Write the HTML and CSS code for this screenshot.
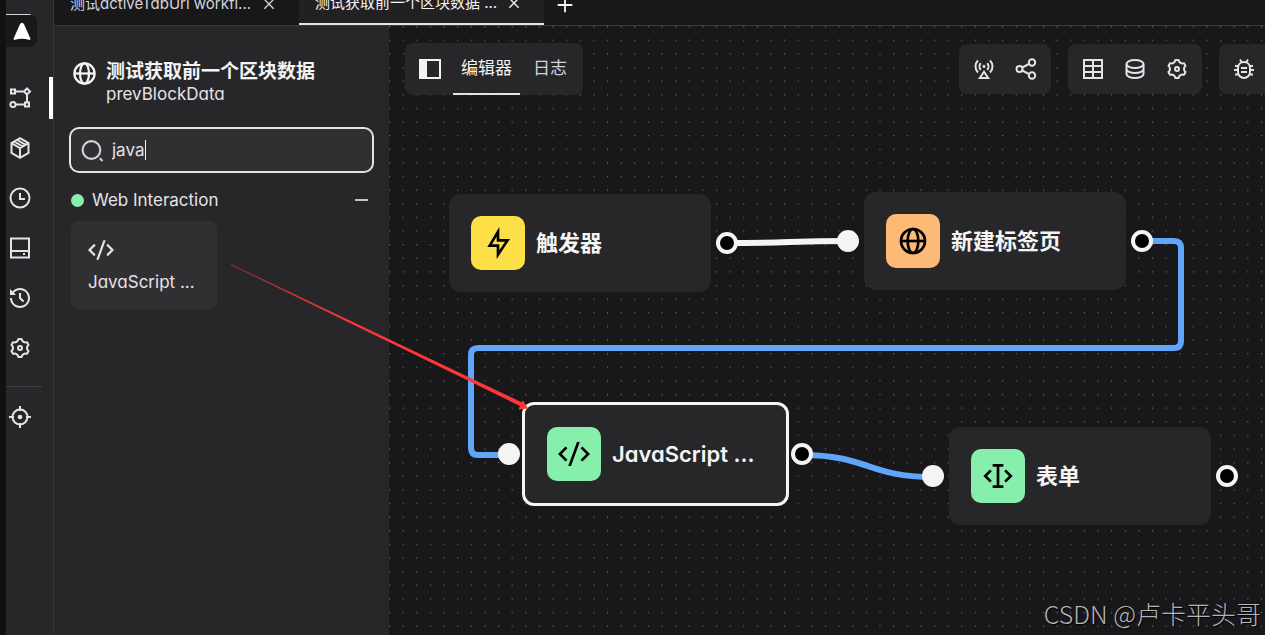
FILE: index.html
```
<!DOCTYPE html>
<html lang="zh-CN">
<head>
    <meta charset="UTF-8">
    <meta name="viewport" content="width=device-width, initial-scale=1.0">
    <title>测试获取前一个区块数据</title>
    <link rel="stylesheet" href="styles.css">
</head>
<body>
    <!-- icon set -->
    <svg class="icon-defs" aria-hidden="true">
        <symbol id="i-globe" viewBox="0 0 24 24"><g fill="none" stroke="currentColor" stroke-width="2"><circle cx="12" cy="12" r="9"/><ellipse cx="12" cy="12" rx="4" ry="9"/><path d="M3 12h18"/></g></symbol>
        <symbol id="i-flow" viewBox="0 0 24 24"><g fill="none" stroke="currentColor" stroke-width="2"><path d="M3 3.500h4v4H3zM17 16.500h4v4h-4zM7 5.500h9M19 8v8M8 18.500h9M19 2.500l3 3-3 3-3-3z"/><circle cx="5" cy="18.500" r="2.600"/></g></symbol>
        <symbol id="i-box" viewBox="0 0 24 24"><path fill="none" stroke="currentColor" stroke-width="2" d="M12 2.200l8.500 4.900v9.800L12 21.800l-8.500-4.900V7.100zM3.500 7.200L12 12l8.500-4.800M12 12v9.500M6.300 5.700l8.500 4.800M9.200 4l8.500 4.800"/></symbol>
        <symbol id="i-clock" viewBox="0 0 24 24"><path fill="none" stroke="currentColor" stroke-width="2" d="M12 2.500a9.500 9.500 0 1 0 0 19 9.500 9.500 0 0 0 0-19zM12 7v6h5"/></symbol>
        <symbol id="i-drive" viewBox="0 0 24 24"><path fill="none" stroke="currentColor" stroke-width="2" d="M3 2.500h18v19H3zM3 15h18"/><path fill="currentColor" d="M15 17h2v2h-2z"/></symbol>
        <symbol id="i-history" viewBox="0 0 24 24"><path fill="currentColor" d="M12 2c5.523 0 10 4.477 10 10s-4.477 10-10 10S2 17.523 2 12h2c0 4.418 3.582 8 8 8s8-3.582 8-8-3.582-8-8-8C9.536 4 7.332 5.114 5.865 6.865L8 9H2V3l2.447 2.446C6.280 3.336 8.984 2 12 2zm1 5v4.585l3.243 3.243-1.415 1.415L11 12.413V7h2z"/></symbol>
        <symbol id="i-gear" viewBox="0 0 24 24"><path fill="currentColor" d="M3.340 17a10.020 10.020 0 0 1-.978-2.326 3 3 0 0 0 .002-5.347A9.990 9.990 0 0 1 4.865 4.990a3 3 0 0 0 4.631-2.674 9.990 9.990 0 0 1 5.007.002 3 3 0 0 0 4.632 2.672c.579.590 1.093 1.261 1.525 2.010.433.749.757 1.530.978 2.326a3 3 0 0 0-.002 5.347 9.990 9.990 0 0 1-2.501 4.337 3 3 0 0 0-4.631 2.674 9.990 9.990 0 0 1-5.007-.002 3 3 0 0 0-4.632-2.672A10.018 10.018 0 0 1 3.340 17zm5.660.196a4.993 4.993 0 0 1 2.250 2.770c.499.047 1 .048 1.499.001A4.993 4.993 0 0 1 15 17.197a4.993 4.993 0 0 1 3.525-.565c.290-.408.540-.843.748-1.298A4.993 4.993 0 0 1 18 12c0-1.260.470-2.437 1.273-3.334a8.126 8.126 0 0 0-.750-1.298A4.993 4.993 0 0 1 15 6.804a4.993 4.993 0 0 1-2.250-2.770c-.499-.047-1-.048-1.499-.001A4.993 4.993 0 0 1 9 6.803a4.993 4.993 0 0 1-3.525.565 7.990 7.990 0 0 0-.748 1.298A4.993 4.993 0 0 1 6 12c0 1.260-.470 2.437-1.273 3.334a8.126 8.126 0 0 0 .750 1.298A4.993 4.993 0 0 1 9 17.196zM12 15a3 3 0 1 1 0-6 3 3 0 0 1 0 6zm0-2a1 1 0 1 0 0-2 1 1 0 0 0 0 2z"/></symbol>
        <symbol id="i-focus" viewBox="0 0 24 24"><g fill="none" stroke="currentColor" stroke-width="2"><circle cx="12" cy="12" r="7.500"/><path d="M12 1v5M12 18v5M1 12h5M18 12h5"/></g><circle cx="12" cy="12" r="2.300" fill="currentColor"/></symbol>
        <symbol id="i-search" viewBox="0 0 24 24"><path fill="none" stroke="currentColor" stroke-width="2" d="M11 3a8.500 8.500 0 1 0 0 17 8.500 8.500 0 0 0 0-17zM19 19.500l2.600 2.600"/></symbol>
        <symbol id="i-code" viewBox="0 0 24 24"><path fill="currentColor" d="M24 12l-5.657 5.657-1.414-1.414L21.172 12l-4.243-4.243 1.414-1.414L24 12zM2.828 12l4.243 4.243-1.414 1.414L0 12l5.657-5.657L7.070 7.757 2.828 12zm6.960 9H7.660l6.552-18h2.128L9.788 21z"/></symbol>
        <symbol id="i-form" viewBox="0 0 24 24"><path fill="currentColor" d="M8 21v-2h3V5H8V3h8v2h-3v14h3v2H8zM18.050 7.050L23 12l-4.950 4.950-1.414-1.414L20.172 12l-3.536-3.536L18.050 7.050zm-12.100 0l1.414 1.414L3.828 12l3.536 3.536L5.950 16.950 1 12l4.950-4.950z"/></symbol>
        <symbol id="i-flash" viewBox="0 0 24 24"><path fill="currentColor" fill-rule="evenodd" d="M13 9h8L11 24v-9H4l9-15v9zm-2 2V7.220L7.532 13H13v4.394L17.263 11H11z"/></symbol>
        <symbol id="i-sidebar" viewBox="0 0 24 24"><path fill="currentColor" fill-rule="evenodd" d="M1 2h22v20H1zM9 4v16h12V4z"/></symbol>
        <symbol id="i-signal" viewBox="0 0 24 24"><path fill="currentColor" fill-rule="evenodd" d="M12 13l6 9H6l6-9zm0 3.600L9.740 20h4.520L12 16.600zm-1.060-6.040a1.500 1.500 0 1 1 2.120-2.120 1.500 1.500 0 0 1-2.120 2.120zM5.281 2.783l1.415 1.415a7.500 7.500 0 0 0 0 10.606l-1.415 1.415a9.500 9.500 0 0 1 0-13.436zm13.436 0a9.500 9.500 0 0 1 0 13.436l-1.415-1.415a7.500 7.500 0 0 0 0-10.606l1.415-1.415zM8.110 5.611l1.414 1.414a3.500 3.500 0 0 0 0 4.950l-1.414 1.414a5.500 5.500 0 0 1 0-7.778zm7.778 0a5.500 5.500 0 0 1 0 7.778l-1.414-1.414a3.500 3.500 0 0 0 0-4.950l1.414-1.414z"/></symbol>
        <symbol id="i-share" viewBox="0 0 24 24"><g fill="none" stroke="currentColor" stroke-width="2"><circle cx="5.500" cy="12" r="3"/><circle cx="18" cy="5.500" r="3.200"/><circle cx="18" cy="18.500" r="3.200"/><path d="M8.200 10.500l7-3.600M8.200 13.500l7 3.600"/></g></symbol>
        <symbol id="i-table" viewBox="0 0 24 24"><path fill="none" stroke="currentColor" stroke-width="2" d="M3 3h18v18H3zM3 9h18M3 15h18M12 3v18"/></symbol>
        <symbol id="i-database" viewBox="0 0 24 24"><g fill="none" stroke="currentColor" stroke-width="2"><ellipse cx="12" cy="7" rx="8.500" ry="4"/><path d="M3.500 7v10c0 2.200 3.800 4 8.500 4s8.500-1.800 8.500-4V7M3.500 12c0 2.200 3.800 4 8.500 4s8.500-1.800 8.500-4"/></g></symbol>
        <symbol id="i-bug" viewBox="0 0 24 24"><path fill="none" stroke="currentColor" stroke-width="2" d="M12 5c3.500 0 6 2.500 6 6v4a6 6 0 0 1-12 0v-4c0-3.500 2.500-6 6-6zM8 2.500l2 3M16 2.500l-2 3M3 9h4M17 9h4M2 13h4M18 13h4M3 17.500h4M17 17.500h4M9 11h6M9 15h6"/></symbol>
        <symbol id="i-close" viewBox="0 0 24 24"><path fill="none" stroke="currentColor" stroke-width="2" d="M5 5l14 14M19 5L5 19"/></symbol>
        <symbol id="i-plus" viewBox="0 0 24 24"><path fill="none" stroke="currentColor" stroke-width="2" d="M12 4v16M4 12h16"/></symbol>
    </svg>

    <nav class="rail">
        <a class="logo" href="#" aria-label="Home">
            <svg viewBox="0 0 24 24"><path fill="#fff" d="M12 3c1 0 2 1 2.600 2.500L21 20c.5 1.400-.3 2-1.500 1.600C15 20 9 20 4.500 21.600 3.300 22 2.500 21.400 3 20L9.400 5.500C10 4 11 3 12 3z"/></svg>
        </a>
        <a class="rail-link active" href="#" aria-label="Workflows"><svg><use href="#i-flow"/></svg></a>
        <a class="rail-link" href="#" aria-label="Packages"><svg><use href="#i-box"/></svg></a>
        <a class="rail-link" href="#" aria-label="Schedule"><svg><use href="#i-clock"/></svg></a>
        <a class="rail-link" href="#" aria-label="Storage"><svg><use href="#i-drive"/></svg></a>
        <a class="rail-link" href="#" aria-label="Logs"><svg><use href="#i-history"/></svg></a>
        <a class="rail-link" href="#" aria-label="Settings"><svg><use href="#i-gear"/></svg></a>
        <hr>
        <a class="rail-link" href="#" aria-label="Element selector"><svg><use href="#i-focus"/></svg></a>
    </nav>

    <div class="app">
        <header class="tabs">
            <div class="tab">
                <span>测试activeTabUrl workfl...</span>
                <button aria-label="Close"><svg><use href="#i-close"/></svg></button>
            </div>
            <div class="tab active">
                <span>测试获取前一个区块数据 ...</span>
                <button aria-label="Close"><svg><use href="#i-close"/></svg></button>
            </div>
            <button class="add-tab" aria-label="New tab"><svg><use href="#i-plus"/></svg></button>
        </header>

        <div class="workspace">
            <aside class="panel">
                <div class="workflow">
                    <svg><use href="#i-globe"/></svg>
                    <div>
                        <h1>测试获取前一个区块数据</h1>
                        <p>prevBlockData</p>
                    </div>
                </div>
                <label class="search">
                    <svg><use href="#i-search"/></svg>
                    <input type="text" value="java" aria-label="Search blocks">
                    <i class="caret"></i>
                </label>
                <button class="category">
                    <i class="dot"></i>
                    <span>Web Interaction</span>
                    <i class="minus"></i>
                </button>
                <div class="blocks">
                    <button class="block">
                        <svg><use href="#i-code"/></svg>
                        <span>JavaScript ...</span>
                    </button>
                </div>
            </aside>

            <main class="canvas">
                <svg class="edges" aria-hidden="true">
                    <defs>
                        <pattern id="grid" width="20" height="20" patternUnits="userSpaceOnUse" patternTransform="scale(.6812)">
                            <rect width="1.600" height="2" fill="#66666b"/>
                        </pattern>
                    </defs>
                    <rect width="100%" height="100%" fill="url(#grid)"/>
                    <path class="edge light" d="M338 217C400 217 400 215 459 215"/>
                    <path class="edge" d="M753 215h32q7 0 7 7v93q0 7-7 7H89q-7 0-7 7v93q0 7 7 7h30"/>
                    <path class="edge" d="M413 429C479 429 479 451 544 451"/>
                </svg>

                <div class="toolbar">
                    <div class="group modes">
                        <button aria-label="Toggle sidebar"><svg><use href="#i-sidebar"/></svg></button>
                        <button class="mode active">编辑器</button>
                        <button class="mode">日志</button>
                    </div>
                    <div class="group actions first">
                        <button aria-label="Host workflow"><svg><use href="#i-signal"/></svg></button>
                        <button aria-label="Share"><svg><use href="#i-share"/></svg></button>
                    </div>
                    <div class="group actions">
                        <button aria-label="Table"><svg><use href="#i-table"/></svg></button>
                        <button aria-label="Global data"><svg><use href="#i-database"/></svg></button>
                        <button aria-label="Settings"><svg><use href="#i-gear"/></svg></button>
                    </div>
                    <div class="group actions last">
                        <button aria-label="Debug"><svg><use href="#i-bug"/></svg></button>
                    </div>
                </div>

                <div class="node trigger">
                    <div class="tile yellow"><svg><use href="#i-flash"/></svg></div>
                    <span>触发器</span>
                    <i class="handle source"></i>
                </div>
                <div class="node new-tab">
                    <div class="tile orange"><svg><use href="#i-globe"/></svg></div>
                    <span>新建标签页</span>
                    <i class="handle target"></i>
                    <i class="handle source"></i>
                </div>
                <div class="node javascript selected">
                    <div class="tile green"><svg><use href="#i-code"/></svg></div>
                    <span>JavaScript ...</span>
                    <i class="handle target"></i>
                    <i class="handle source"></i>
                </div>
                <div class="node form">
                    <div class="tile green"><svg><use href="#i-form"/></svg></div>
                    <span>表单</span>
                    <i class="handle target"></i>
                    <i class="handle source"></i>
                </div>
                <p class="watermark">CSDN @卢卡平头哥</p>
            </main>

            <svg class="arrow" aria-hidden="true">
                <defs>
                    <linearGradient id="fade">
                        <stop offset="0" stop-color="#ff3636" stop-opacity=".5"/>
                        <stop offset=".4" stop-color="#ff3636"/>
                    </linearGradient>
                </defs>
                <path fill="url(#fade)" d="M177 238L467.500 376.200L469 374.500L474 382.500L464.500 383.500L466 380L177 239z"/>
            </svg>
        </div>
    </div>
</body>
</html>
```
FILE: styles.css
```
* {
    box-sizing: border-box;
}
body {
    margin: 0;
    min-height: 100vh;
    display: flex;
    border-left: 6px solid #111111;
    background-color: #18181b;
    color: #f4f4f5;
    font-family: Inter, "Noto Sans CJK SC", sans-serif;
    font-feature-settings: "cv11";
    font-size: 17px;
    overflow: hidden;
}
h1, p {
    margin: 0;
}
button {
    padding: 0;
    border: none;
    background: none;
    color: inherit;
    font: inherit;
    font-feature-settings: inherit;
    cursor: pointer;
}
svg {
    display: block;
    width: 24px;
    height: 24px;
    flex-shrink: 0;
}
.icon-defs {
    position: absolute;
    width: 0;
    height: 0;
}

/* left rail */
.rail {
    width: 48px;
    flex-shrink: 0;
    padding-top: 14px;
    background-color: #27272a;
    border-right: 1px solid #353538;
}
.logo {
    display: flex;
    align-items: center;
    justify-content: center;
    width: 31px;
    height: 33px;
    margin-bottom: 26px;
    background-color: #18181b;
    border-radius: 0 8px 8px 0;
    background-image: linear-gradient(#d4d4d8, #d4d4d8);
    background-size: 25px 1px;
    background-repeat: no-repeat;
}
.logo svg {
    width: 22px;
    height: 22px;
}
.rail-link {
    display: flex;
    align-items: center;
    height: 50px;
    padding-left: 2px;
    color: #e4e4e7;
}
.rail-link.active {
    background: linear-gradient(#fff, #fff) right center / 4px 42px no-repeat;
}
.rail hr {
    width: 36px;
    margin: 13px 0 5px;
    border: none;
    border-top: 1px solid #3f3f43;
}

/* tabs, pulled up so only their lower half shows */
.app {
    flex: 1;
    min-width: 0;
    display: flex;
    flex-direction: column;
}
.tabs {
    display: flex;
    align-items: flex-end;
    height: 26px;
    border-bottom: 1px solid #39393e;
}
.tab {
    display: flex;
    align-items: center;
    justify-content: space-between;
    width: 245px;
    height: 43px;
    padding: 0 22px 0 16px;
    font-size: 15px;
    line-height: 20px;
    color: #d4d4d8;
    white-space: nowrap;
}
.tab.active {
    background-color: #212124;
    border-bottom: 2px solid #e4e4e7;
    color: #f4f4f5;
}
.tab svg {
    width: 16px;
    height: 16px;
}
.add-tab {
    height: 40px;
    padding-left: 10px;
}
.add-tab svg {
    width: 22px;
    height: 22px;
}

.workspace {
    position: relative;
    flex: 1;
    display: flex;
}

/* block list */
.panel {
    width: 335px;
    flex-shrink: 0;
    padding: 34px 15px 16px;
    background-color: #27272a;
}
.workflow {
    display: flex;
    gap: 8px;
    padding-left: 2px;
}
.workflow svg {
    width: 27px;
    height: 27px;
}
.workflow h1 {
    font-size: 19px;
    line-height: 24px;
}
.workflow p {
    line-height: 20px;
    color: #e4e4e7;
}
.search {
    position: relative;
    display: flex;
    align-items: center;
    gap: 7px;
    height: 46px;
    margin-top: 23px;
    padding-left: 9px;
    border: 2px solid #e4e4e7;
    border-radius: 10px;
    background-color: #303033;
}
.search svg {
    width: 25px;
    height: 25px;
    color: #d4d4d8;
}
.search input {
    flex: 1;
    min-width: 0;
    padding: 0;
    border: none;
    outline: none;
    background: none;
    color: #e4e4e7;
    font: inherit;
    font-feature-settings: normal;
}
.caret {
    position: absolute;
    left: 74px;
    width: 1px;
    height: 20px;
    background-color: #f4f4f5;
}
.category {
    display: flex;
    align-items: center;
    gap: 8px;
    width: 100%;
    margin: 16px 0 10px;
    padding: 0 6px 0 2px;
    line-height: 22px;
    color: #e4e4e7;
    font-feature-settings: normal;
}
.dot {
    width: 13px;
    height: 13px;
    border-radius: 50%;
    background-color: #86efac;
}
.minus {
    width: 13px;
    height: 2px;
    margin-left: auto;
    background-color: #c4c4c8;
}
.blocks {
    display: grid;
    grid-template-columns: 1fr 1fr;
    gap: 10px;
    padding: 0 2px;
}
.block {
    padding: 16px 17px;
    border-radius: 8px;
    background-color: #303033;
    text-align: left;
    line-height: 22px;
    white-space: nowrap;
    color: #e4e4e7;
}
.block svg {
    width: 26px;
    height: 26px;
    margin-bottom: 8px;
}

/* canvas */
.canvas {
    position: relative;
    flex: 1;
    min-width: 0;
    overflow: hidden;
}
.edges, .arrow {
    position: absolute;
    inset: 0;
    width: 100%;
    height: 100%;
    pointer-events: none;
}
.edge {
    fill: none;
    stroke: #60a5fa;
    stroke-width: 6px;
}
.edge.light {
    stroke: #f4f4f5;
}
.toolbar {
    position: relative;
    display: flex;
    align-items: center;
    gap: 17px;
    padding: 17px 0 0 16px;
}
.group {
    display: flex;
    align-items: center;
    border-radius: 8px;
    background-color: #27272a;
}
.modes {
    height: 52px;
    padding: 0 8px 0 13px;
    gap: 5px;
}
.modes svg {
    margin-right: 6px;
}
.mode {
    height: 52px;
    padding: 0 8px;
    line-height: 22px;
    color: #d4d4d8;
    border-bottom: 2px solid transparent;
}
.mode.active {
    color: #f4f4f5;
    border-color: #e4e4e7;
}
.actions {
    height: 50px;
    padding: 0 4px;
}
.actions.first {
    margin-left: auto;
}
.actions.last {
    padding-right: 0;
    border-radius: 8px 0 0 8px;
}
.actions button {
    width: 42px;
    height: 42px;
    display: flex;
    align-items: center;
    justify-content: center;
    color: #e4e4e7;
}

/* nodes */
.node {
    position: absolute;
    display: flex;
    align-items: center;
    gap: 11px;
    width: 262px;
    padding: 22px;
    border-radius: 12px;
    background-color: #27272a;
    font-size: 22px;
    font-weight: 600;
    line-height: 28px;
    white-space: nowrap;
}
.trigger {
    left: 60px;
    top: 168px;
}
.new-tab {
    left: 475px;
    top: 166px;
}
.javascript {
    left: 133px;
    top: 376px;
}
.form {
    left: 560px;
    top: 401px;
}
.node.selected {
    width: 267px;
    border: 3px solid #f4f4f5;
}
.tile {
    display: flex;
    align-items: center;
    justify-content: center;
    width: 54px;
    height: 54px;
    border-radius: 10px;
    color: #000;
}
.tile svg {
    width: 32px;
    height: 32px;
}
.yellow {
    background-color: #fde047;
}
.orange {
    background-color: #fdba74;
}
.green {
    background-color: #86efac;
}
.handle {
    position: absolute;
    top: calc(50% - 11px);
    width: 22px;
    height: 22px;
    border: 4px solid #f4f4f5;
    border-radius: 50%;
    background-color: #f4f4f5;
}
.source {
    right: -27px;
    background-color: #000;
}
.target {
    left: -27px;
}
.watermark {
    position: absolute;
    right: 4px;
    bottom: 4px;
    font-family: "Noto Sans CJK SC", sans-serif;
    font-size: 25px;
    font-weight: 300;
    line-height: 36px;
    color: #b4b4b6;
    text-shadow: 1px 1px 1px #000;
}
```
